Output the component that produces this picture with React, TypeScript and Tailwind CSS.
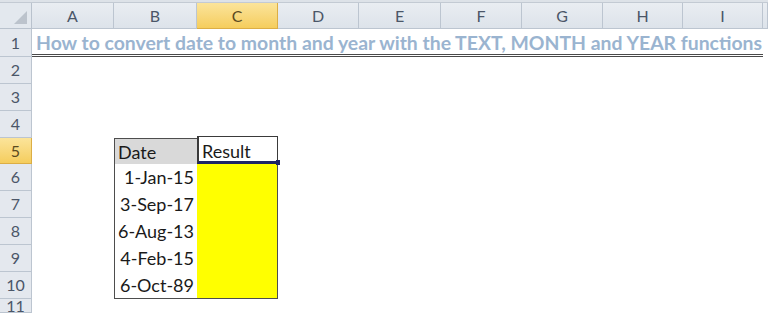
import React from "react";

const cols = ["A", "B", "C", "D", "E", "F", "G", "H", "I", ""];
const rowH = [28, 27, 27, 27, 26, 27, 27, 27, 27, 27, 14];
const dates = ["1-Jan-15", "3-Sep-17", "6-Aug-13", "4-Feb-15", "6-Oct-89"];

function Cell({ r, c }: { r: number; c: number }) {
  const base = "relative overflow-visible";
  if (r === 1) {
    const isLast = c === 9;
    return (
      <div className={`${base} ${isLast ? "" : "border-b-[3px] border-double border-[#4a4a4a]"}`}>
        {c === 0 && (
          <div className="absolute left-[4px] top-[1px] whitespace-nowrap text-[19.4px] font-bold leading-[25px] text-[#9ab4d0]">
            How to convert date to month and year with the TEXT, MONTH and YEAR functions
          </div>
        )}
      </div>
    );
  }
  if (r === 5 && c === 1) {
    return (
      <div className="bg-[#d9d9d9] border-l border-t border-[#4d4d4d] flex items-center pl-[3px] pt-[2px] text-[18px] text-[#1a1a1a]">
        Date
      </div>
    );
  }
  if (r === 5 && c === 2) {
    return (
      <div className="relative bg-white border-l-2 border-t border-r border-[#3a3a3a] border-b-[3px] border-b-[#1e2466] flex items-center pl-[3px] pt-[4px] text-[18px] text-[#1a1a1a] -mt-[2px]">
        Result
        <div className="absolute -right-[3px] -bottom-[4px] w-[4px] h-[5px] bg-[#1e2466]" />
      </div>
    );
  }
  if (r >= 6 && r <= 10 && c === 1) {
    return (
      <div
        className={`bg-white border-l border-[#4d4d4d] ${r === 10 ? "border-b" : ""} flex items-center justify-end pr-[3px] text-[18px] text-[#1a1a1a]`}
      >
        {dates[r - 6]}
      </div>
    );
  }
  if (r >= 6 && r <= 10 && c === 2) {
    return (
      <div className={`bg-[#ffff00] border-r border-[#4d4d4d] ${r === 10 ? "border-b" : ""}`} />
    );
  }
  return <div className="bg-white" />;
}

export default function App() {
  return (
    <div
      className="w-[768px] h-[313px] overflow-hidden bg-white"
      style={{ fontFamily: "Lato, 'Open Sans', 'Liberation Sans', sans-serif" }}
    >
      <div className="h-[3px] bg-[#dde2e8] border-b border-[#c3cad3]" />
      <div
        className="grid"
        style={{
          gridTemplateColumns: "32px 82px 83px 81px 81px 82px 81px 81px 80px 80px 5px",
          gridTemplateRows: `26px ${rowH.map((h) => h + "px").join(" ")}`,
        }}
      >
        <div className="relative bg-[#e3e8ee] border-r border-b border-[#b9c2cd]">
          <div className="absolute right-[4px] bottom-[4px] w-0 h-0 border-l-[13px] border-l-transparent border-b-[13px] border-b-[#bcc3cc]" />
        </div>
        {cols.map((l, i) => (
          <div
            key={"h" + i}
            className={`flex items-center justify-center text-[16px] border-r border-b ${
              l === "C"
                ? "bg-gradient-to-b from-[#fbe49a] to-[#f5cd5c] border-[#dcae45] text-[#5a4a20]"
                : "bg-gradient-to-b from-[#e9edf2] to-[#dde3ea] border-[#bcc5d0] text-[#4b5668]"
            }`}
          >
            {l}
          </div>
        ))}
        {rowH.map((_, ri) => {
          const r = ri + 1;
          return (
            <React.Fragment key={"r" + r}>
              <div
                className={`flex items-center justify-center text-[16px] border-r border-b ${
                  r === 5
                    ? "bg-gradient-to-b from-[#fbe49a] to-[#f5cd5c] border-[#dcae45] text-[#5a4a20]"
                    : "bg-[#e4e8ee] border-[#bcc5d0] text-[#4b5668]"
                }`}
              >
                {r}
              </div>
              {cols.map((_, ci) => (
                <Cell key={r + "-" + ci} r={r} c={ci} />
              ))}
            </React.Fragment>
          );
        })}
      </div>
    </div>
  );
}
